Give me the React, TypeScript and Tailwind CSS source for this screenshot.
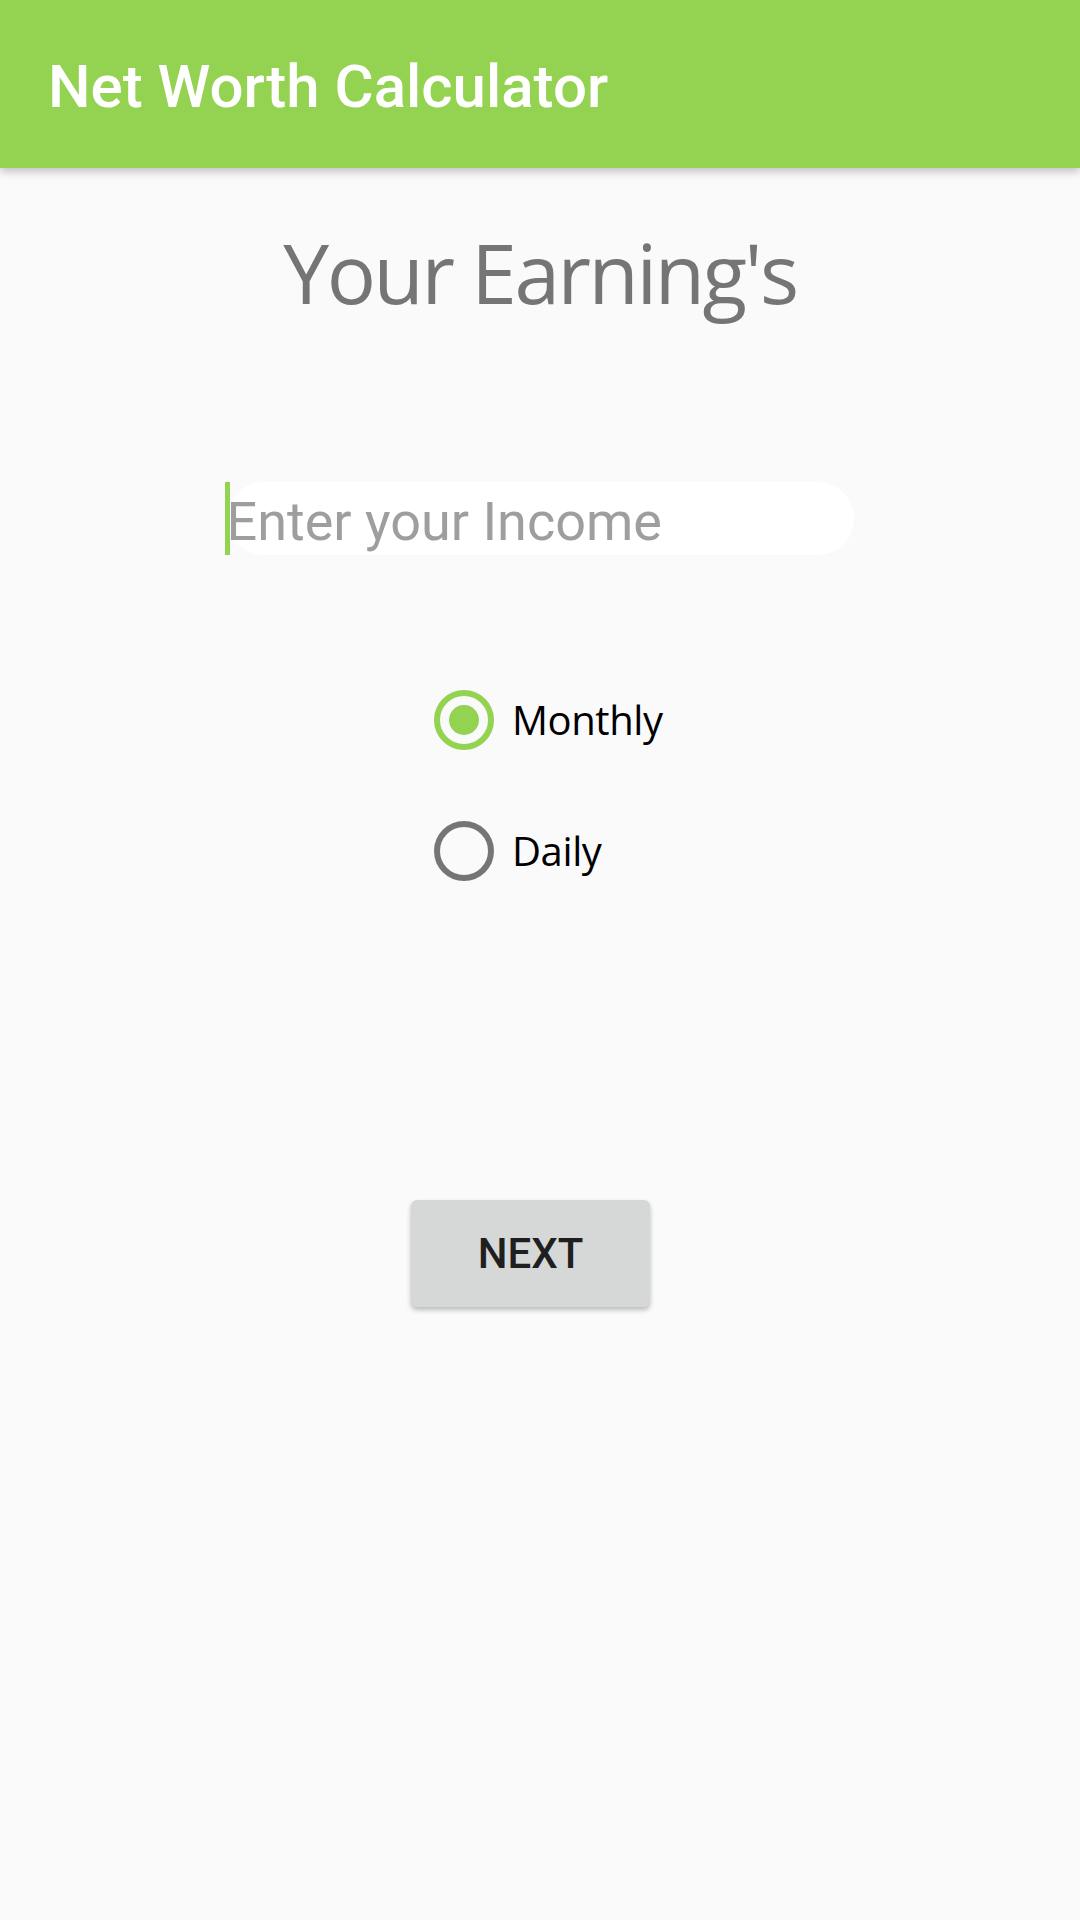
import { useState } from "react";

export default function App() {
  const [period, setPeriod] = useState<"monthly" | "daily">("monthly");

  return (
    <div className="min-h-screen w-full bg-[#fafafa] font-['Roboto',sans-serif]">
      <header className="relative z-10 flex h-[168px] items-center bg-[#94d352] pl-[48px] pt-[6px] shadow-[0_4px_8px_rgba(0,0,0,0.22)]">
        <h1 className="text-[60px] font-medium text-white">Net Worth Calculator</h1>
      </header>

      <main className="flex flex-col items-center">
        <h2 className="mt-[63px] font-['Open_Sans',sans-serif] text-[82px] leading-none tracking-[-0.03em] text-[#757575]">
          Your Earning's
        </h2>

        <div className="relative mt-[169px] h-[73px] w-[627px] rounded-full bg-white">
          <input
            type="number"
            placeholder="Enter your Income"
            className="h-full w-full bg-transparent pt-[6px] text-[54px] text-black outline-none placeholder:text-[#9e9e9e]"
          />
          <span className="absolute left-[-2px] top-0 h-full w-[5px] bg-[#94d352]" />
        </div>

        <div className="mt-[117px] flex w-[248px] flex-col items-start gap-[35px]">
          {[
            { id: "monthly" as const, label: "Monthly" },
            { id: "daily" as const, label: "Daily" },
          ].map((opt) => {
            const on = period === opt.id;
            return (
              <button
                key={opt.id}
                onClick={() => setPeriod(opt.id)}
                className="flex h-[96px] items-center"
              >
                <span className="flex h-[96px] w-[96px] items-center justify-center">
                  <span
                    className={
                      on
                        ? "flex h-[60px] w-[60px] items-center justify-center rounded-full border-[6px] border-[#94d352]"
                        : "flex h-[60px] w-[60px] items-center justify-center rounded-full border-[6px] border-[#757575]"
                    }
                  >
                    {on && <span className="h-[30px] w-[30px] rounded-full bg-[#94d352]" />}
                  </span>
                </span>
                <span className="font-['Open_Sans',sans-serif] text-[40px] tracking-[-0.01em] text-black">
                  {opt.label}
                </span>
              </button>
            );
          })}
        </div>

        <button className="mr-[19px] mt-[301px] h-[107px] w-[239px] rounded-[6px] bg-[#d6d7d7] text-[42px] font-medium text-[#1f1f1f] shadow-[0_3px_5px_rgba(0,0,0,0.25)]">
          NEXT
        </button>
      </main>
    </div>
  );
}
